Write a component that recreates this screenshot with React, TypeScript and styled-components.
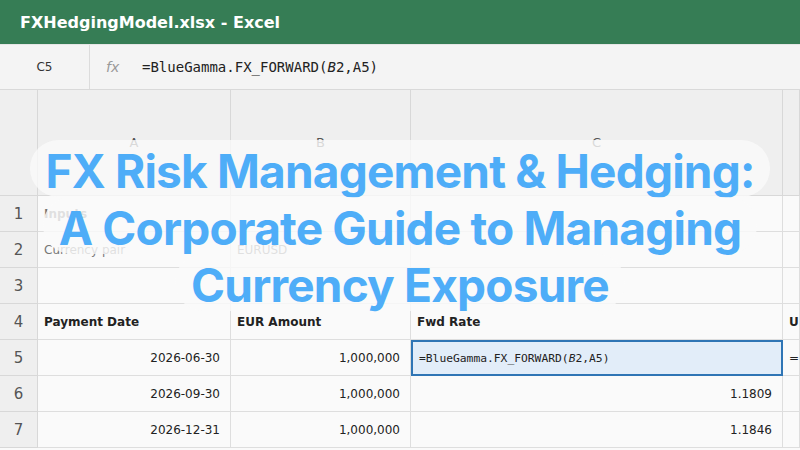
import React from "react";
import styled, { createGlobalStyle } from "styled-components";

const Global = createGlobalStyle`
  html, body { margin: 0; padding: 0; }
  body { width: 800px; height: 450px; overflow: hidden; background: #fafafa; font-family: "DejaVu Sans", sans-serif; }
`;

const Page = styled.div`
  position: relative;
  width: 800px;
  height: 450px;
  display: flex;
  flex-direction: column;
  overflow: hidden;
`;

const TitleBar = styled.div`
  height: 44px;
  background: #367d55;
  color: #fff;
  font-family: "DejaVu Sans", sans-serif;
  font-weight: 700;
  font-size: 16px;
  display: flex;
  align-items: center;
  padding-left: 20px;
  flex: none;
`;

const FormulaBar = styled.div`
  height: 46px;
  background: #f4f4f4;
  border-top: 1px solid #e6e6e6;
  border-bottom: 1px solid #d9d9d9;
  box-sizing: border-box;
  display: flex;
  align-items: center;
  flex: none;
`;

const NameBox = styled.div`
  width: 90px;
  height: 100%;
  border-right: 1px solid #dcdcdc;
  box-sizing: border-box;
  display: flex;
  align-items: center;
  justify-content: center;
  font-size: 12px;
  color: #333;
`;

const Fx = styled.span`
  font-style: italic;
  color: #999;
  font-size: 14px;
  margin-left: 16px;
  width: 36px;
`;

const Formula = styled.span`
  font-family: "DejaVu Sans Mono", monospace;
  font-size: 14px;
  color: #222;
`;

const Sheet = styled.div`
  display: grid;
  grid-template-columns: 38px 193px 180px 372px 1fr;
  grid-template-rows: 106px repeat(7, 36px);
  flex: none;
`;

const ColHead = styled.div`
  background: #efefef;
  border-right: 1px solid #d8d8d8;
  border-bottom: 1px solid #d8d8d8;
  display: flex;
  align-items: center;
  justify-content: center;
  font-size: 13px;
  color: #555;
`;

const RowHead = styled.div`
  background: #efefef;
  border-right: 1px solid #d8d8d8;
  border-bottom: 1px solid #d8d8d8;
  display: flex;
  align-items: center;
  justify-content: center;
  font-size: 15px;
  color: #555;
`;

const Cell = styled.div<{ $align?: string; $bold?: boolean; $muted?: boolean }>`
  background: #fafafa;
  border-right: 1px solid #dedede;
  border-bottom: 1px solid #dedede;
  display: flex;
  align-items: center;
  justify-content: ${(p) => (p.$align === "right" ? "flex-end" : "flex-start")};
  padding: 0 10px 0 6px;
  font-size: 12px;
  font-weight: ${(p) => (p.$bold ? 700 : 400)};
  color: ${(p) => (p.$muted ? "#777" : "#222")};
  white-space: nowrap;
  overflow: hidden;
  min-width: 0;
`;

const SelectedCell = styled.div`
  background: #e2edf9;
  border: 2px solid #2f75b5;
  display: flex;
  align-items: center;
  padding: 0 6px;
  font-family: "DejaVu Sans Mono", monospace;
  font-size: 11.3px;
  color: #222;
  white-space: nowrap;
`;

const Overlay = styled.div`
  position: absolute;
  top: 140px;
  left: 0;
  right: 0;
  display: flex;
  flex-direction: column;
  align-items: center;
  pointer-events: none;
`;

const TitleLine = styled.div`
  height: 57px;
  padding: 4px 16px 0;
  box-sizing: border-box;
  border-radius: 29px;
  background: rgba(250, 250, 250, 0.8);
  display: flex;
  align-items: center;
  font-family: "Inter", sans-serif;
  font-weight: 700;
  font-size: 46px;
  letter-spacing: -0.8px;
  color: #4eadf8;
  white-space: nowrap;
`;

const rows = [
  { n: 1, a: "Inputs", aBold: true, aMuted: true, b: "", c: "", d: "" },
  { n: 2, a: "Currency pair", aMuted: true, b: "EURUSD", bMuted: true, c: "", d: "" },
  { n: 3, a: "", b: "", c: "", d: "" },
  { n: 4, a: "Payment Date", aBold: true, b: "EUR Amount", bBold: true, c: "Fwd Rate", cBold: true, d: "U", dBold: true },
  { n: 5, a: "2026-06-30", aRight: true, b: "1,000,000", bRight: true, c: "SEL", d: "=B" },
  { n: 6, a: "2026-09-30", aRight: true, b: "1,000,000", bRight: true, c: "1.1809", cRight: true, d: "" },
  { n: 7, a: "2026-12-31", aRight: true, b: "1,000,000", bRight: true, c: "1.1846", cRight: true, d: "" },
] as any[];

export default function App() {
  return (
    <Page>
      <Global />
      <TitleBar>FXHedgingModel.xlsx - Excel</TitleBar>
      <FormulaBar>
        <NameBox>C5</NameBox>
        <Fx>fx</Fx>
        <Formula>
          =BlueGamma.FX_FORWARD(<i>B</i>2,A5)
        </Formula>
      </FormulaBar>
      <Sheet>
        <ColHead />
        <ColHead>A</ColHead>
        <ColHead>B</ColHead>
        <ColHead>C</ColHead>
        <ColHead />
        {rows.map((r) => (
          <React.Fragment key={r.n}>
            <RowHead>{r.n}</RowHead>
            <Cell $align={r.aRight ? "right" : "left"} $bold={r.aBold} $muted={r.aMuted}>{r.a}</Cell>
            <Cell $align={r.bRight ? "right" : "left"} $bold={r.bBold} $muted={r.bMuted}>{r.b}</Cell>
            {r.c === "SEL" ? (
              <SelectedCell>
                =BlueGamma.FX_FORWARD(<i>B</i>2,A5)
              </SelectedCell>
            ) : (
              <Cell $align={r.cRight ? "right" : "left"} $bold={r.cBold}>{r.c}</Cell>
            )}
            <Cell $bold={r.dBold}>{r.d}</Cell>
          </React.Fragment>
        ))}
      </Sheet>
      <Overlay>
        <TitleLine>FX Risk Management &amp; Hedging:</TitleLine>
        <TitleLine>A Corporate Guide to Managing</TitleLine>
        <TitleLine>Currency Exposure</TitleLine>
      </Overlay>
    </Page>
  );
}
